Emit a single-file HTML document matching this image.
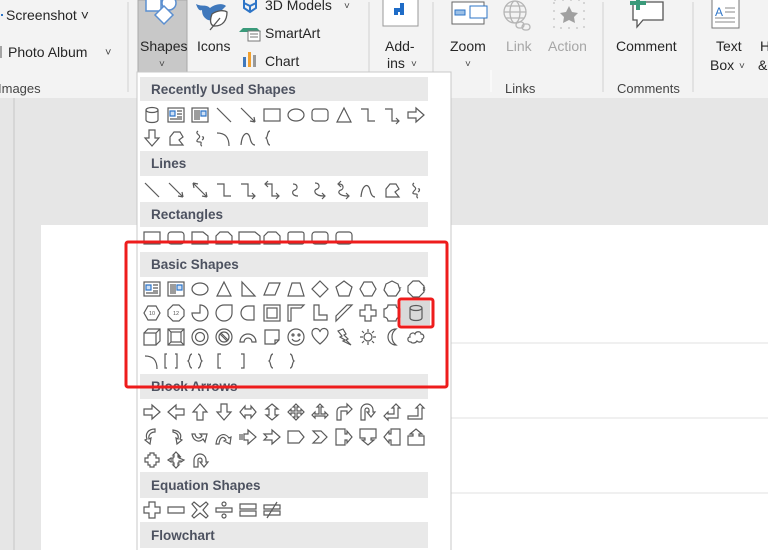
<!DOCTYPE html>
<html><head><meta charset="utf-8"><style>
html,body{margin:0;padding:0;width:768px;height:550px;overflow:hidden;background:#e6e6e6}
svg{display:block}
text{font-family:"Liberation Sans",sans-serif}
.rl{font-size:14px;fill:#262626}
.gl{font-size:13px;fill:#444}
.hd{font-size:13.5px;font-weight:bold;fill:#4d5260}
.dis{fill:#a6a6a6}
</style></head><body>
<svg width="768" height="550" viewBox="0 0 768 550" xmlns="http://www.w3.org/2000/svg">
<defs>
<g id="cyl"><path d="M3 4a6 2.5 0 0 1 12 0v10a6 2.5 0 0 1-12 0zM3 4a6 2.5 0 0 0 12 0"/></g>
<g id="tb"><rect x="1" y="2" width="16" height="14"/><path d="M3 5h5v5H3z" stroke="#2e75c7" fill="#cfe0f5"/><path d="M10 5h5M10 8h5M10 11h5M3 13h12"/></g>
<g id="vtb"><rect x="1" y="2" width="16" height="14"/><path d="M4 4v10M6 4v10M8 4v10"/><path d="M10 5h5v5h-5z" stroke="#2e75c7" fill="#cfe0f5"/></g>
<g id="ln"><path d="M2 2L16 16"/></g>
<g id="al"><path d="M2 2L16 16M16 16l-5-1M16 16l-1-5"/></g>
<g id="dal"><path d="M2 2L16 16M16 16l-5-1M16 16l-1-5M2 2l5 1M2 2l1 5"/></g>
<g id="rc"><rect x="1" y="3" width="16" height="12"/></g>
<g id="ov"><ellipse cx="9" cy="9" rx="8" ry="6"/></g>
<g id="rr"><rect x="1" y="3" width="16" height="12" rx="3"/></g>
<g id="tri"><path d="M9 2L16 16H2z"/></g>
<g id="el"><path d="M2 3H9V15H16"/></g>
<g id="ela"><path d="M2 3H9V15H16M13 12l3 3-3 3"/></g>
<g id="elda"><path d="M3 3H9V15H16M13 12l3 3-3 3M5 0L2 3l3 3"/></g>
<g id="cc"><path d="M6 3c5 0 5 5 2 6c-4 1-3 6 3 6"/></g>
<g id="cca"><path d="M4 2c5 0 5 5 2 6c-4 1-3 7 7 7M11 12l3 3-3 3"/></g>
<g id="ccda"><path d="M4 3c5 0 5 5 2 6c-4 1-3 6 7 6M11 12l3 3-3 3M6 0L3 3l3 3"/></g>
<g id="ra"><path d="M1 6H9V2L17 9 9 16V12H1z"/></g>
<g id="la"><path d="M17 6H9V2L1 9 9 16V12H17z"/></g>
<g id="ua"><path d="M6 17V9H2L9 1 16 9H12V17z"/></g>
<g id="da"><path d="M6 1V9H2L9 17 16 9H12V1z"/></g>
<g id="ff"><path d="M3 16V8L7 3H13L16 8 12 11 16 16z"/></g>
<g id="scr"><path d="M7 2c-4 3 4 4 1 7s-3 4 1 4c3 0-1 3 2 4M11 8c2-1 2 2 0 3"/></g>
<g id="cu"><path d="M2 4c8 0 12 4 12 13"/></g>
<g id="cv2"><path d="M2 16C3 4 9 1 11 9c1 5 3 7 5 7"/></g>
<g id="brl"><path d="M11 2c-3 0-2 6-4 7c2 1 1 7 4 7"/></g>
<g id="brr"><path d="M7 2c3 0 2 6 4 7c-2 1-1 7-4 7"/></g>
<g id="bkl"><path d="M11 2H8V16H11"/></g>
<g id="bkr"><path d="M7 2H10V16H7"/></g>
<g id="dbk"><path d="M5 2H3V16H5M13 2H15V16H13"/></g>
<g id="dbr"><path d="M6 2c-3 0-2 6-4 7c2 1 1 7 4 7M12 2c3 0 2 6 4 7c-2 1-1 7-4 7"/></g>
<g id="arc"><path d="M2 4c8 0 12 4 12 13"/></g>
<g id="rtri"><path d="M3 2V16H16z"/></g>
<g id="par"><path d="M6 3H17L12 15H1z"/></g>
<g id="trap"><path d="M5 3H13L17 16H1z"/></g>
<g id="dia"><path d="M9 1L17 9 9 17 1 9z"/></g>
<g id="pent"><path d="M9 1L17 7 14 16H4L1 7z"/></g>
<g id="hex"><path d="M5 2H13L17 9 13 16H5L1 9z"/></g>
<g id="hep"><path d="M9 1L15 4 17 10 13 16H5L1 10 3 4z"/></g>
<g id="oct"><path d="M6 1H12L17 6V12L12 17H6L1 12V6z"/></g>
<g id="pie"><path d="M9 9V1A8 8 0 1 1 1 9z"/></g>
<g id="tear"><path d="M9 1H17V9A8 8 0 1 1 9 1z"/></g>
<g id="chord"><path d="M15 2L15 16H9A7 7 0 0 1 9 2z"/></g>
<g id="frm"><rect x="1" y="1" width="16" height="16"/><rect x="4" y="4" width="10" height="10"/></g>
<g id="hfrm"><path d="M1 17V1H17L14 4H4V17z"/></g>
<g id="lsh"><path d="M3 1H8V11H16V16H3z"/></g>
<g id="diag"><path d="M1 17V12L12 1H17z"/></g>
<g id="crs"><path d="M6 1H12V6H17V12H12V17H6V12H1V6H6z"/></g>
<g id="plq"><path d="M5 1H13A4 4 0 0 0 17 5V13A4 4 0 0 0 13 17H5A4 4 0 0 0 1 13V5A4 4 0 0 0 5 1z"/></g>
<g id="cube"><path d="M1 5H13V17H1zM1 5L5 1H17V13L13 17M13 5L17 1"/></g>
<g id="bev"><rect x="1" y="1" width="16" height="16"/><rect x="4" y="4" width="10" height="10"/><path d="M1 1L4 4M17 1L14 4M1 17L4 14M17 17L14 14"/></g>
<g id="don"><circle cx="9" cy="9" r="8"/><circle cx="9" cy="9" r="4.5"/></g>
<g id="nos"><circle cx="9" cy="9" r="8"/><circle cx="9" cy="9" r="5"/><path d="M5 6L12 13M6 5L13 12"/></g>
<g id="barc"><path d="M1 14A8 8 0 0 1 17 14H13A4 4 0 0 0 5 14z"/></g>
<g id="fold"><path d="M2 2H16V12L12 16H2zM16 12H12V16"/></g>
<g id="smi"><circle cx="9" cy="9" r="8"/><circle cx="6" cy="7" r="1"/><circle cx="12" cy="7" r="1"/><path d="M5 11c2 3 6 3 8 0"/></g>
<g id="hrt"><path d="M9 16C3 11 1 8 1 5a4 4 0 0 1 8-1a4 4 0 0 1 8 1c0 3-2 6-8 11z"/></g>
<g id="lgt"><path d="M3 3L8 1 11 6 9 7 13 11 11 12 16 17 8 13 10 12 5 9 7 8z"/></g>
<g id="sun"><circle cx="9" cy="9" r="4"/><path d="M9 1v3M9 14v3M1 9h3M14 9h3M3 3l2 2M13 13l2 2M3 15l2-2M13 5l2-2"/></g>
<g id="moon"><path d="M13 1A8 8 0 0 0 13 17A10 10 0 0 1 13 1z"/></g>
<g id="cld"><path d="M4 14c-4 0-4-5-1-5c-1-4 4-5 5-3c1-3 6-3 6 0c3 0 4 4 1 5c1 3-3 4-5 2c-2 3-6 2-6 1z"/></g>
<g id="lra"><path d="M1 9L6 3V6H12V3L17 9 12 15V12H6V15z"/></g>
<g id="uda"><path d="M9 1L15 6H12V12H15L9 17 3 12H6V6H3z"/></g>
<g id="qa"><path d="M9 1L12 4H10V8H14V6L17 9 14 12V10H10V14H12L9 17 6 14H8V10H4V12L1 9 4 6V8H8V4H6z"/></g>
<g id="lrua"><path d="M9 1L12 4H10V11H14V9L17 12 14 15V13H4V15L1 12 4 9V11H8V4H6z"/></g>
<g id="bnt"><path d="M2 17V8A4 4 0 0 1 6 4H12V1L17 6 12 11V8H6V17z"/></g>
<g id="ut"><path d="M2 17V7A6 6 0 0 1 14 7V9H16L12 14 8 9H10V7A2 2 0 0 0 6 7V17z"/></g>
<g id="lua"><path d="M1 13L5 9V11H11V5H9L13 1 17 5H15V15H5V17z"/></g>
<g id="bua"><path d="M1 13H11V5H9L13 1 17 5H15V16H1z"/></g>
<g id="cra"><path d="M12 1C5 1 2 6 4 11l-2 1 5 4 1-6-2 1C5 7 8 4 12 4z"/></g>
<g id="cla"><path d="M6 2C13 3 15 7 13 11l2 1-5 4-1-6 2 1C12 7 10 5 6 4z"/></g>
<g id="cua"><path d="M1 6C2 13 8 15 12 11l2 3 2-8-7 0 2 2C9 11 5 11 4 6z"/></g>
<g id="cda"><path d="M1 16C2 6 10 4 14 10l2-1-1 7-6-3 2-1C9 8 5 8 4 16z"/></g>
<g id="sra"><path d="M1 6v6M3 6v6M5 6H9V2L17 9 9 16V12H5z"/></g>
<g id="nra"><path d="M1 6H9V2L17 9 9 16V12H1L4 9z"/></g>
<g id="pnt"><path d="M1 3H12L17 9 12 15H1z"/></g>
<g id="chv"><path d="M2 3H10L16 9 10 15H2L8 9z"/></g>
<g id="rcl"><path d="M1 1H10V6H12V3L17 9 12 15V12H10V17H1z"/></g>
<g id="dcl"><path d="M1 1H17V10H12V12H15L9 17 3 12H6V10H1z"/></g>
<g id="lcl"><path d="M17 1H8V6H6V3L1 9 6 15V12H8V17H17z"/></g>
<g id="ucl"><path d="M1 17H17V8H12V6H15L9 1 3 6H6V8H1z"/></g>
<g id="udcl"><path d="M5 4H7V2H11V4H13V7H16V11H13V14H11V16H7V14H5V11H2V7H5z"/></g>
<g id="qcl"><path d="M9 1L12 4H11V6H12V5L14 6H12V7L17 9 14 11V10H12V12H11V14H12L9 17 6 14H7V12H6V10H4V11L1 9 4 7V8H6V6H7V4H6z"/></g>
<g id="circa"><path d="M3 16V9A6 6 0 0 1 15 9V11H17L13 16 9 11H11V9A2 2 0 0 0 7 9V16z"/></g>
<g id="pls"><path d="M6 1H12V6H17V12H12V17H6V12H1V6H6z"/></g>
<g id="mns"><path d="M1 6H17V12H1z"/></g>
<g id="mul"><path d="M3 1L9 6 15 1 17 3 12 9 17 15 15 17 9 12 3 17 1 15 6 9 1 3z"/></g>
<g id="div"><circle cx="9" cy="3" r="2"/><circle cx="9" cy="15" r="2"/><path d="M1 7H17V11H1z"/></g>
<g id="eq"><path d="M1 3H17V8H1zM1 10H17V15H1z"/></g>
<g id="neq"><path d="M1 4H17V8H1zM1 10H17V14H1zM4 17L14 1"/></g>
</defs>

<!-- ribbon -->
<rect x="0" y="0" width="768" height="98" fill="#f3f3f3"/>
<line x1="14" y1="98" x2="14" y2="550" stroke="#c6c6c6"/>
<rect x="41" y="225" width="727" height="325" fill="#fff"/>
<g stroke="#e2e2e2"><line x1="450" y1="343" x2="768" y2="343"/><line x1="450" y1="418" x2="768" y2="418"/><line x1="450" y1="493" x2="768" y2="493"/></g>

<path d="M1 14h2v2H1z" fill="#2e75c7"/>
<text x="6" y="20" class="rl">Screenshot ˅</text>
<path d="M1 46v12" stroke="#555"/>
<text x="8" y="57" class="rl">Photo Album</text>
<text x="105" y="56" class="gl" style="font-size:11px">˅</text>
<text x="-2" y="93" class="gl">Images</text>
<line x1="128" y1="2" x2="128" y2="92" stroke="#d0d0d0"/>

<rect x="138" y="0" width="49" height="73" fill="#c8c8c8" stroke="#a8a8a8"/>
<g fill="#fff" stroke="#5b8fd0" stroke-width="1.5"><rect x="146" y="-4" width="15" height="15"/><circle cx="169" cy="3" r="7"/><path d="M164 6l9 9-9 9-9-9z"/></g>
<text x="140" y="51" class="rl">Shapes</text>
<text x="159" y="67" class="gl" style="font-size:10px">˅</text>

<path d="M196 4c6 3 10 0 14 4c3-3 12-6 16-2l-4 4c0 8-7 12-14 10c-4-2-6-5-6-10c-2 1-4 0-6-6z" fill="#3f78bc"/>
<path d="M212 14c6-4 12-4 15-2c0 8-4 14-12 14c-4 0-6-4-3-12zM210 30l10-12" fill="#fff" stroke="#555" stroke-width="1.3"/>
<text x="197" y="51" class="rl">Icons</text>

<path d="M244 -1v9l6 4 6-4v-9M244 3l6 3 6-3M250 6v6" fill="none" stroke="#2e75c7" stroke-width="2"/>
<text x="265" y="10" class="rl">3D Models</text>
<text x="344" y="9" class="gl" style="font-size:10px">˅</text>
<path d="M243 28h14l4 4h-22z" fill="#3a9a7a"/><rect x="248" y="31" width="12" height="10" fill="#fff" stroke="#777"/><path d="M250 34h8M250 37h8" stroke="#777"/>
<text x="265" y="38" class="rl">SmartArt</text>
<rect x="243" y="57" width="3" height="10" fill="#3f78bc"/><rect x="248" y="52" width="3" height="15" fill="#f0a030"/><rect x="253" y="55" width="3" height="12" fill="#999"/>
<text x="265" y="66" class="rl">Chart</text>
<line x1="369" y1="2" x2="369" y2="92" stroke="#d0d0d0"/>

<rect x="383" y="-2" width="35" height="28" fill="#fff" stroke="#999"/>
<path d="M394 8h6v-5h4v12h-4v-3h-2v3h-4zM393 10l3 3" fill="#1f6cc7"/><circle cx="396" cy="13" r="2" fill="#1f6cc7"/>
<text x="385" y="51" class="rl">Add-</text>
<text x="387" y="68" class="rl">ins</text><text x="411" y="67" class="gl" style="font-size:10px">˅</text>
<line x1="433" y1="2" x2="433" y2="92" stroke="#d0d0d0"/>

<rect x="452" y="2" width="32" height="22" fill="#fff" stroke="#666"/><rect x="455" y="10" width="10" height="5" fill="#9cc0e6" stroke="#2e75c7"/><rect x="470" y="6" width="17" height="12" fill="#fff" stroke="#2e75c7"/>
<text x="450" y="51" class="rl">Zoom</text>
<text x="465" y="67" class="gl" style="font-size:10px">˅</text>
<g fill="none" stroke="#b5b5b5" stroke-width="1.3"><circle cx="515" cy="12" r="11"/><ellipse cx="515" cy="12" rx="5" ry="11"/><path d="M504 12h22M506 6h18M506 18h18"/><rect x="516" y="22" width="8" height="6" rx="3"/><rect x="522" y="24" width="8" height="6" rx="3"/></g>
<text x="506" y="51" class="rl dis">Link</text>
<rect x="554" y="0" width="30" height="28" fill="none" stroke="#b5b5b5" stroke-dasharray="2 6"/>
<path d="M569 6l3 6 6 1-4 4 1 6-6-3-6 3 1-6-4-4 6-1z" fill="#a0a0a0"/>
<text x="548" y="51" class="rl dis">Action</text>
<line x1="491" y1="70" x2="491" y2="92" stroke="#fff"/>
<text x="505" y="93" class="gl">Links</text>
<line x1="603" y1="2" x2="603" y2="92" stroke="#d0d0d0"/>

<path d="M633 2h30v18h-20l-6 7v-7h-4z" fill="#fff" stroke="#555" stroke-width="1.3"/>
<path d="M629 -2h6v-4h4v4h6v4h-6v5h-4v-5h-6z" fill="#3a9a7a" transform="translate(1,3)"/>
<text x="616" y="51" class="rl">Comment</text>
<text x="617" y="93" class="gl">Comments</text>
<line x1="693" y1="2" x2="693" y2="92" stroke="#d0d0d0"/>

<path d="M712 -2h27v30h-27z" fill="#fff" stroke="#777"/>
<text x="715" y="16" style="font-size:12px;fill:#2e75c7;font-family:'Liberation Sans'">A</text>
<path d="M725 8h10M725 12h10M715 18h20M715 22h20" stroke="#888"/>
<text x="716" y="51" class="rl">Text</text>
<text x="710" y="70" class="rl">Box</text><text x="739" y="69" class="gl" style="font-size:10px">˅</text>
<text x="760" y="51" class="rl">H</text><text x="758" y="70" class="rl">&amp;</text>

<!-- dropdown -->
<rect x="137" y="72" width="314" height="480" fill="#fff" stroke="#c8c8c8"/>
<g fill="#e9e9e9">
<rect x="140" y="77" width="288" height="24"/>
<rect x="140" y="151" width="288" height="25"/>
<rect x="140" y="202" width="288" height="25"/>
<rect x="140" y="252" width="288" height="25"/>
<rect x="140" y="374" width="288" height="25"/>
<rect x="140" y="472" width="288" height="26"/>
<rect x="140" y="522" width="288" height="26"/>
</g>
<text x="151" y="94" class="hd">Recently Used Shapes</text>
<text x="151" y="168" class="hd">Lines</text>
<text x="151" y="219" class="hd">Rectangles</text>
<text x="151" y="269" class="hd">Basic Shapes</text>
<text x="151" y="391" class="hd">Block Arrows</text>
<text x="151" y="490" class="hd">Equation Shapes</text>
<text x="151" y="540" class="hd">Flowchart</text>

<rect x="401" y="301" width="29" height="24" fill="#d9d9d9"/>

<g fill="none" stroke="#5a5a5a" stroke-width="1.2">
<!-- recent row1 -->
<use href="#cyl" x="143" y="106"/><use href="#tb" x="167" y="106"/><use href="#vtb" x="191" y="106"/><use href="#ln" x="215" y="106"/><use href="#al" x="239" y="106"/><use href="#rc" x="263" y="106"/><use href="#ov" x="287" y="106"/><use href="#rr" x="311" y="106"/><use href="#tri" x="335" y="106"/><use href="#el" x="359" y="106"/><use href="#ela" x="383" y="106"/><use href="#ra" x="407" y="106"/>
<use href="#da" x="143" y="129"/><use href="#ff" x="167" y="129"/><use href="#scr" x="191" y="129"/><use href="#cu" x="215" y="129"/><use href="#cv2" x="239" y="129"/><use href="#brl" x="259" y="129"/>
<!-- lines -->
<use href="#ln" x="143" y="181"/><use href="#al" x="167" y="181"/><use href="#dal" x="191" y="181"/><use href="#el" x="215" y="181"/><use href="#ela" x="239" y="181"/><use href="#elda" x="263" y="181"/><use href="#cc" x="287" y="181"/><use href="#cca" x="311" y="181"/><use href="#ccda" x="335" y="181"/><use href="#cv2" x="359" y="181"/><use href="#ff" x="383" y="181"/><use href="#scr" x="407" y="181"/>
<!-- rectangles -->
<rect x="144" y="232" width="16" height="12"/><rect x="168" y="232" width="16" height="12" rx="3"/><path d="M192 232h11l5 4v8h-16z"/><path d="M220 232h8l4 4v8h-16v-8z"/><path d="M240 232h11l5 4v8h-21v-12z" transform="translate(4,0)"/><path d="M268 232h8l4 4v8h-16v-8z"/><rect x="288" y="232" width="16" height="12" rx="2"/><rect x="312" y="232" width="16" height="12" rx="3"/><rect x="336" y="232" width="16" height="12" rx="3"/>
<!-- basic -->
<use href="#tb" x="143" y="280"/><use href="#vtb" x="167" y="280"/><use href="#ov" x="191" y="280"/><use href="#tri" x="215" y="280"/><use href="#rtri" x="239" y="280"/><use href="#par" x="263" y="280"/><use href="#trap" x="287" y="280"/><use href="#dia" x="311" y="280"/><use href="#pent" x="335" y="280"/><use href="#hex" x="359" y="280"/><use href="#hep" x="383" y="280"/><use href="#oct" x="407" y="280"/>
<use href="#hex" x="143" y="304"/><use href="#oct" x="167" y="304"/><use href="#pie" x="191" y="304"/><use href="#tear" x="215" y="304"/><use href="#chord" x="239" y="304"/><use href="#frm" x="263" y="304"/><use href="#hfrm" x="287" y="304"/><use href="#lsh" x="311" y="304"/><use href="#diag" x="335" y="304"/><use href="#crs" x="359" y="304"/><use href="#plq" x="383" y="304"/><use href="#cyl" x="407" y="304"/>
<use href="#cube" x="143" y="328"/><use href="#bev" x="167" y="328"/><use href="#don" x="191" y="328"/><use href="#nos" x="215" y="328"/><use href="#barc" x="239" y="328"/><use href="#fold" x="263" y="328"/><use href="#smi" x="287" y="328"/><use href="#hrt" x="311" y="328"/><use href="#lgt" x="335" y="328"/><use href="#sun" x="359" y="328"/><use href="#moon" x="383" y="328"/><use href="#cld" x="407" y="328"/>
<use href="#arc" x="143" y="352"/><use href="#dbk" x="162" y="352"/><use href="#dbr" x="186" y="352"/><use href="#bkl" x="210" y="352"/><use href="#bkr" x="234" y="352"/><use href="#brl" x="262" y="352" transform="scale(1)"/><use href="#brr" x="283" y="352"/>
<!-- block arrows -->
<use href="#ra" x="143" y="403"/><use href="#la" x="167" y="403"/><use href="#ua" x="191" y="403"/><use href="#da" x="215" y="403"/><use href="#lra" x="239" y="403"/><use href="#uda" x="263" y="403"/><use href="#qa" x="287" y="403"/><use href="#lrua" x="311" y="403"/><use href="#bnt" x="335" y="403"/><use href="#ut" x="359" y="403"/><use href="#lua" x="383" y="403"/><use href="#bua" x="407" y="403"/>
<use href="#cra" x="143" y="428"/><use href="#cla" x="167" y="428"/><use href="#cua" x="191" y="428"/><use href="#cda" x="215" y="428"/><use href="#sra" x="239" y="428"/><use href="#nra" x="263" y="428"/><use href="#pnt" x="287" y="428"/><use href="#chv" x="311" y="428"/><use href="#rcl" x="335" y="428"/><use href="#dcl" x="359" y="428"/><use href="#lcl" x="383" y="428"/><use href="#ucl" x="407" y="428"/>
<use href="#udcl" x="143" y="451"/><use href="#qcl" x="167" y="451"/><use href="#circa" x="191" y="451"/>
<!-- equation -->
<use href="#pls" x="143" y="501"/><use href="#mns" x="167" y="501"/><use href="#mul" x="191" y="501"/><use href="#div" x="215" y="501"/><use href="#eq" x="239" y="501"/><use href="#neq" x="263" y="501"/>
</g>
<g font-size="5.5" fill="#555" text-anchor="middle"><text x="400" y="291">7</text><text x="424" y="291">8</text><text x="152" y="315">10</text><text x="176" y="315">12</text></g>

<!-- red highlights -->
<rect x="126" y="242" width="321" height="145" fill="none" stroke="#ee1c1c" stroke-width="3" rx="2"/>
<rect x="399" y="299" width="34" height="28" fill="none" stroke="#ee1c1c" stroke-width="3" rx="2"/>
</svg>
</body></html>
